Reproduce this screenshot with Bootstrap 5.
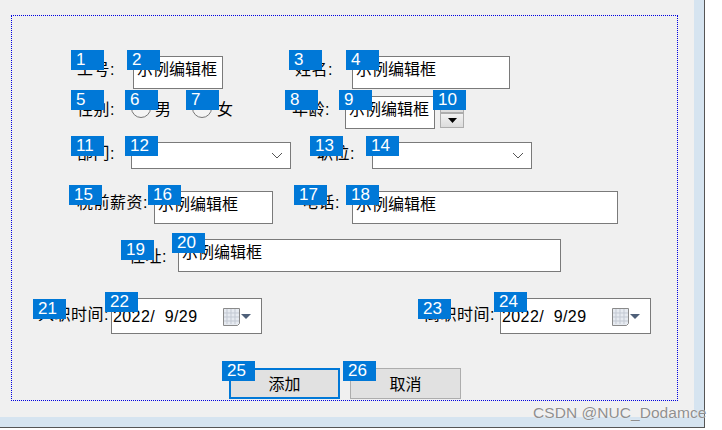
<!DOCTYPE html>
<html lang="zh">
<head>
<meta charset="utf-8">
<title>添加员工</title>
<link rel="stylesheet" href="https://cdn.jsdelivr.net/npm/bootstrap@5.3.0/dist/css/bootstrap.min.css">
<style>
html,body{width:722px;height:430px;margin:0;background:#fff;overflow:hidden;}
body{font:16px/20px "Liberation Sans","Noto Sans CJK SC",sans-serif;color:#000;}
.win{width:705px;height:428px;background:#d6e4f0;border-right:1px solid #555;border-bottom:1px solid #555;}
.client{width:694px;height:417px;background:#f0f0f0;position:relative;}
.guide{position:absolute;left:11px;top:15px;width:667px;height:386px;border:1px dotted #0000e0;}
.lbl,.box,.tab,.spin,.rad,.rtxt,.cmdbtn{position:absolute;}
.lbl,.rtxt{white-space:nowrap;}
.lbl{letter-spacing:.5px;}
.box{background:#fff;border:1px solid #7a7a7a;height:33px;padding:3px 3px;white-space:nowrap;overflow:hidden;}
.cb{height:27px;}
.cb svg{position:absolute;right:7px;top:9px;}
.dt{height:36px;top:298px;width:151px;padding:8px 1px;letter-spacing:.4px;}
.dt svg{position:absolute;left:110px;top:8px;}
.tab{width:33px;height:20px;background:#0078d7;color:#fff;font-size:17px;line-height:20px;padding-left:5px;z-index:3;}
.rad{width:20px;height:20px;top:98px;border:1px solid #777;border-radius:50%;background:#f4f4f4;}
.spin{left:440px;width:24px;height:15px;background:linear-gradient(#f2f2f2,#dcdcdc);border:1px solid #adadad;}
.spin svg{position:absolute;left:6px;top:3px;}
.cmdbtn{top:368px;width:111px;height:31px;background:#e1e1e1;border:1px solid #adadad;border-radius:0;padding:1px 0 0;color:#000;font-size:16px;line-height:29px;}
.cmdbtn.btn:hover{background:#e1e1e1;color:#000;}
.isdefault{border:2px solid #0078d7;line-height:27px;}
.wm{position:absolute;left:533px;top:403px;color:#8f8f8f;font:15.5px/20px "Liberation Sans",sans-serif;letter-spacing:.05px;text-shadow:0 0 1px #fff;white-space:nowrap;z-index:4;}
.b2{left:133px;top:56px;width:90px}.b4{left:352px;top:56px;width:158px}.b9{left:345px;top:96px;width:90px}
.b12{left:131px;top:142px;width:160px}.b14{left:372px;top:142px;width:160px}
.b16{left:154px;top:191px;width:119px}.b18{left:352px;top:191px;width:266px}.b20{left:178px;top:239px;width:383px}
.b22{left:111px}.b24{left:500px}
.l1{left:77px;top:60px}.l3{left:295px;top:60px}.l5{left:77px;top:100px}.l8{left:292px;top:100px}
.l11{left:77px;top:144px}.l13{left:317px;top:144px}.l15{left:77px;top:193px}.l17{left:302px;top:193px}
.l19{left:129px;top:247px}.l21{left:38px;top:305px}.l23{left:424px;top:305px}
.r6{left:131px}.r7{left:192px}.t6{left:155px;top:100px}.t7{left:217px;top:100px}
.s1{top:98px}.s2{top:113px}
.c25{left:229px}.c26{left:350px}
.t1{left:71px;top:50px}.t2{left:127px;top:50px}.t3{left:289px;top:50px}.t4{left:346px;top:50px}
.t5{left:71px;top:90px}.t6b{left:125px;top:90px}.t7b{left:186px;top:90px}.t8{left:285px;top:90px}.t9{left:339px;top:90px}.t10{left:433px;top:90px}
.t11{left:71px;top:136px}.t12{left:125px;top:136px}.t13{left:310px;top:136px}.t14{left:366px;top:136px}
.t15{left:69px;top:185px}.t16{left:148px;top:185px}.t17{left:294px;top:185px}.t18{left:346px;top:185px}
.t19{left:121px;top:240px}.t20{left:172px;top:233px}
.t21{left:33px;top:299px}.t22{left:105px;top:292px}.t23{left:418px;top:299px}.t24{left:494px;top:292px}
.t25{left:222px;top:361px}.t26{left:343px;top:361px}
</style>
</head>
<body>
<svg width="0" height="0" class="d-none"><defs>
<symbol id="cal" viewBox="0 0 30 20"><path d="M1.500 1.500h16v15l-2 2h-14z" fill="#e6eaf0" stroke="#8a8a8a"/><path d="M5 2v15M9 2v15M13 2v15M2 6h15M2 10h15M2 14h15" stroke="#c3c9d3" fill="none"/><path d="M19 7h10l-5 5z" fill="#4f6079"/></symbol>
</defs></svg>
<div class="win">
<div class="client">
<div class="guide"></div>

<span class="lbl l1">工号:</span><div class="box b2">示例编辑框</div>
<span class="lbl l3">姓名:</span><div class="box b4">示例编辑框</div>

<span class="lbl l5">性别:</span>
<span class="rad r6"></span><span class="rtxt t6">男</span>
<span class="rad r7"></span><span class="rtxt t7">女</span>
<span class="lbl l8">年龄:</span><div class="box b9">示例编辑框</div>
<div class="spin s1"></div>
<div class="spin s2"><svg width="11" height="7" viewBox="0 0 11 7"><path d="M1 1h9L5.500 6z" fill="#000"/></svg></div>

<span class="lbl l11">部门:</span>
<div class="box cb b12"><svg width="12" height="7" viewBox="0 0 12 7"><path d="M1 1l5 5 5-5" fill="none" stroke="#555"/></svg></div>
<span class="lbl l13">职位:</span>
<div class="box cb b14"><svg width="12" height="7" viewBox="0 0 12 7"><path d="M1 1l5 5 5-5" fill="none" stroke="#555"/></svg></div>

<span class="lbl l15">税前薪资:</span><div class="box b16">示例编辑框</div>
<span class="lbl l17">电话:</span><div class="box b18">示例编辑框</div>
<span class="lbl l19">住址:</span><div class="box b20">示例编辑框</div>

<span class="lbl l21">入职时间:</span>
<div class="box dt b22">2022/&nbsp; 9/29<svg width="30" height="20"><use href="#cal"/></svg></div>
<span class="lbl l23">离职时间:</span>
<div class="box dt b24">2022/&nbsp; 9/29<svg width="30" height="20"><use href="#cal"/></svg></div>

<button type="button" class="btn cmdbtn isdefault c25">添加</button>
<button type="button" class="btn cmdbtn c26">取消</button>

<span class="tab t1">1</span><span class="tab t2">2</span><span class="tab t3">3</span><span class="tab t4">4</span>
<span class="tab t5">5</span><span class="tab t6b">6</span><span class="tab t7b">7</span><span class="tab t8">8</span>
<span class="tab t9">9</span><span class="tab t10">10</span><span class="tab t11">11</span><span class="tab t12">12</span>
<span class="tab t13">13</span><span class="tab t14">14</span><span class="tab t15">15</span><span class="tab t16">16</span>
<span class="tab t17">17</span><span class="tab t18">18</span><span class="tab t19">19</span><span class="tab t20">20</span>
<span class="tab t21">21</span><span class="tab t22">22</span><span class="tab t23">23</span><span class="tab t24">24</span>
<span class="tab t25">25</span><span class="tab t26">26</span>
<span class="wm">CSDN @NUC_Dodamce</span>
</div>
</div>
<script src="https://cdn.jsdelivr.net/npm/bootstrap@5.3.0/dist/js/bootstrap.bundle.min.js"></script>
</body>
</html>
